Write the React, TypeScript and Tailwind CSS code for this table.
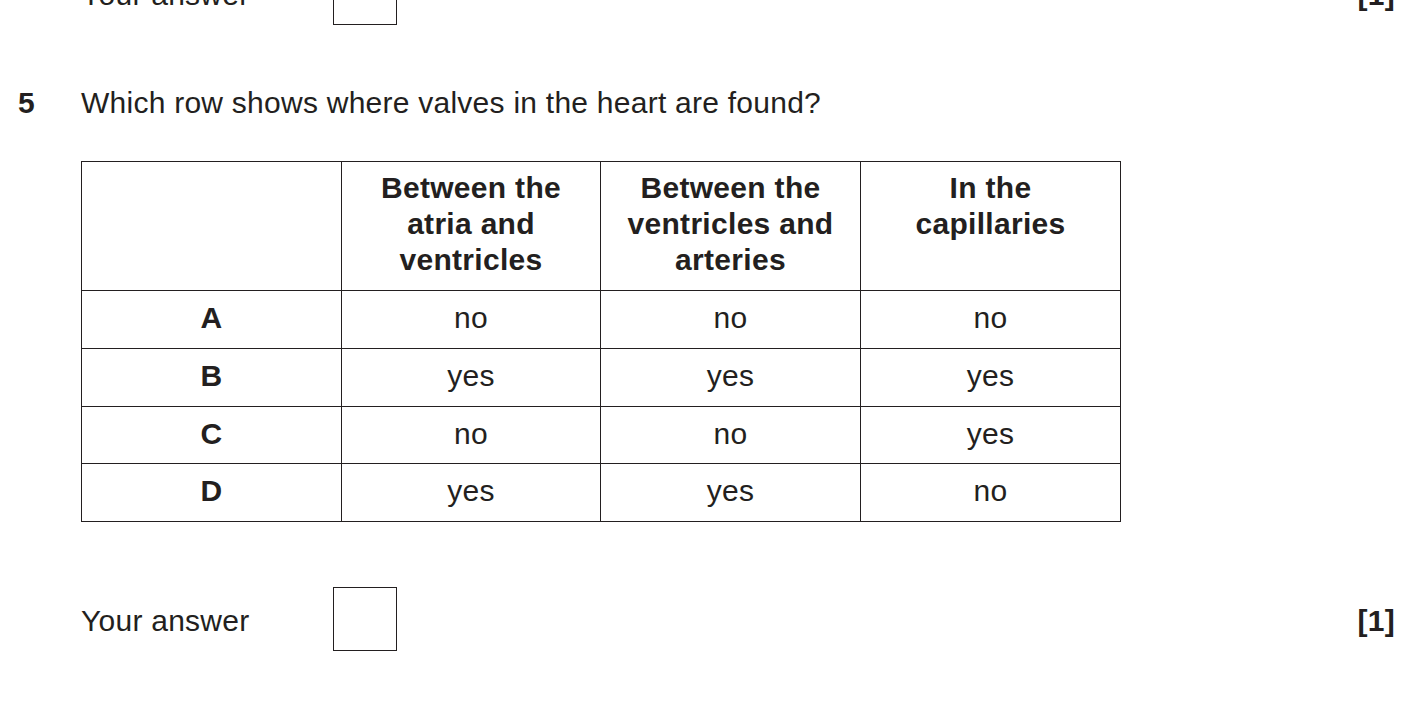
const HEADERS = [
  "Between the atria and ventricles",
  "Between the ventricles and arteries",
  "In the capillaries",
];

const HEADER_LINES: string[][] = [
  ["Between the", "atria and", "ventricles"],
  ["Between the", "ventricles and", "arteries"],
  ["In the", "capillaries"],
];

const ROWS: [string, string, string, string][] = [
  ["A", "no", "no", "no"],
  ["B", "yes", "yes", "yes"],
  ["C", "no", "no", "yes"],
  ["D", "yes", "yes", "no"],
];

const ROW_HEIGHTS = ["h-[58px]", "h-[58px]", "h-[57px]", "h-[58px]"];
const COL_WIDTHS = ["w-[260px]", "w-[259px]", "w-[260px]", "w-[260px]"];

function AnswerRow() {
  return (
    <div className="flex items-center h-[64px] pl-[81px] pr-[19px]">
      <span className="w-[252px] pt-[3px]">Your answer</span>
      <div className="w-[64px] h-[64px] border border-[#231f20]" />
      <span className="ml-auto font-bold pt-[3px]">[1]</span>
    </div>
  );
}

export default function App() {
  return (
    <div
      className="w-[1414px] h-[708px] overflow-hidden bg-white text-[#231f20] text-[30px] leading-[36px] tracking-[0.25px]"
      style={{ fontFamily: '"Liberation Sans", Arial, sans-serif' }}
    >
      <div className="-mt-[39px]">
        <AnswerRow />

        {/* Question */}
        <div className="flex mt-[60px] pl-[18px]">
          <span className="w-[63px] font-bold">5</span>
          <span>Which row shows where valves in the heart are found?</span>
        </div>

        {/* Options table */}
        <table
          className="ml-[81px] mt-[40px] border-collapse table-fixed"
          aria-label={HEADERS.join(", ")}
        >
          <thead>
            <tr className="h-[129px]">
              <th className={`${COL_WIDTHS[0]} border border-[#231f20]`} />
              {HEADER_LINES.map((lines, i) => (
                <th
                  key={i}
                  className={`${COL_WIDTHS[i + 1]} border border-[#231f20] align-top pt-[8px] font-bold text-center tracking-[0.3px]`}
                >
                  {lines.map((l) => (
                    <div key={l}>{l}</div>
                  ))}
                </th>
              ))}
            </tr>
          </thead>
          <tbody>
            {ROWS.map((row, r) => (
              <tr key={row[0]} className={ROW_HEIGHTS[r]}>
                {row.map((cell, j) => (
                  <td
                    key={j}
                    className={`border border-[#231f20] text-center align-middle pb-[3px] ${
                      j === 0 ? "font-bold" : ""
                    }`}
                  >
                    {cell}
                  </td>
                ))}
              </tr>
            ))}
          </tbody>
        </table>

        <div className="mt-[65px]">
          <AnswerRow />
        </div>
      </div>
    </div>
  );
}
